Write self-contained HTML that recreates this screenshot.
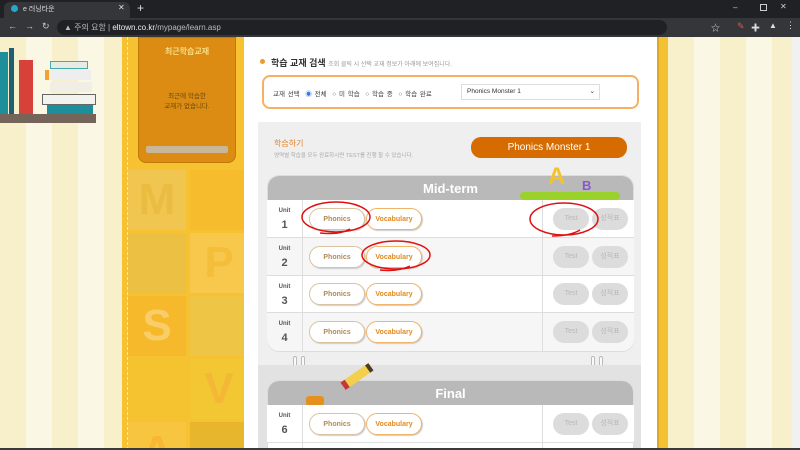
<!DOCTYPE html>
<html style="width:800px;height:450px;overflow:hidden"><head><meta charset="utf-8"><style>
*{margin:0;padding:0;box-sizing:border-box}
body{width:800px;height:450px;overflow:hidden;position:relative;font-family:"Liberation Sans","Noto Sans CJK KR",sans-serif;background:#faf6e2}
.abs{position:absolute}
.stripes{background:repeating-linear-gradient(90deg,#f8efcb 0 26px,#faf7e5 26px 52px)}
.pill{position:absolute;height:22px;border-radius:11px;font-size:7px;font-weight:bold;text-align:center;line-height:21px}
.ph{background:#fff;border:1px solid #d9c3a3;color:#b08a57;width:56px;box-shadow:1px 1px 1px #ccc}
.vo{background:#fff;border:1px solid #f0b36a;color:#e08a1e;width:56px;box-shadow:1px 1px 1px #ccc}
.gr{background:#dcdcdc;color:#b8b8b8;width:36px;font-weight:normal}
.unit{position:absolute;left:267px;width:35px;text-align:center;color:#555;font-weight:bold;line-height:1}
.unit small{display:block;font-size:6px;margin-bottom:2px}
.unit b{font-size:11px}
.row{position:absolute;left:267px;width:367px;border-bottom:1px solid #ddd;background:#fff}
.tile{position:absolute;width:58px;height:60px;overflow:hidden;font-size:44px;font-weight:bold;text-align:center;line-height:60px;color:rgba(220,170,40,.35)}
</style></head><body>
<!-- chrome -->
<div class="abs" style="left:0;top:0;width:800px;height:18px;background:#202124"></div>
<div class="abs" style="left:4px;top:2px;width:126px;height:16px;background:#35363a;border-radius:6px 6px 0 0"></div>
<div class="abs" style="left:11px;top:5px;width:7px;height:7px;border-radius:50%;background:#2aa6c9"></div>
<div class="abs" style="left:23px;top:4px;font-size:7px;color:#ddd">e 러닝타운</div>
<div class="abs" style="left:118px;top:3px;font-size:8px;color:#ddd">✕</div>
<div class="abs" style="left:137px;top:1px;font-size:12px;color:#ddd">+</div>
<div class="abs" style="left:733px;top:3px;font-size:8px;color:#ccc">–</div>
<div class="abs" style="left:760px;top:4px;width:7px;height:7px;border:1px solid #ccc"></div>
<div class="abs" style="left:780px;top:2px;font-size:8px;color:#ccc">✕</div>
<div class="abs" style="left:0;top:18px;width:800px;height:19px;background:#35363a"></div>
<div class="abs" style="left:8px;top:21px;font-size:9px;color:#ccc;letter-spacing:8px">←→↻</div>
<div class="abs" style="left:57px;top:20px;width:610px;height:15px;border-radius:8px;background:#202124"></div>
<div class="abs" style="left:64px;top:22px;font-size:8px;color:#bbb">▲ 주의 요함 | <span style="color:#eee">eltown.co.kr</span>/mypage/learn.asp</div>
<div class="abs" style="left:711px;top:21px;font-size:9px;color:#ccc">☆</div>
<div class="abs" style="left:737px;top:21px;font-size:9px;color:#d55">✎</div>
<div class="abs" style="left:751px;top:21px;font-size:9px;color:#ddd">✚</div>
<div class="abs" style="left:769px;top:21px;font-size:8px;color:#ddd">▲</div>
<div class="abs" style="left:786px;top:20px;font-size:9px;color:#ddd">⋮</div>
<!-- backgrounds -->
<div class="abs stripes" style="left:0;top:37px;width:122px;height:413px"></div>
<div class="abs stripes" style="left:668px;top:37px;width:124px;height:413px"></div>
<div class="abs" style="left:792px;top:37px;width:8px;height:413px;background:#f1f1f1"></div>
<!-- books -->
<div class="abs" style="left:0;top:52px;width:8px;height:62px;background:#1d8f9a"></div>
<div class="abs" style="left:9px;top:48px;width:5px;height:66px;background:#1d5f74"></div>
<div class="abs" style="left:19px;top:60px;width:14px;height:54px;background:#d8403a"></div>
<div class="abs" style="left:50px;top:61px;width:38px;height:8px;background:#e6ebe6;border:1px solid #4aa"></div>
<div class="abs" style="left:45px;top:70px;width:46px;height:10px;background:#eee;border-left:4px solid #f3a12f"></div>
<div class="abs" style="left:50px;top:82px;width:42px;height:10px;background:#f1eee6"></div>
<div class="abs" style="left:42px;top:94px;width:54px;height:11px;background:#f2f2ef;border:1px solid #666"></div>
<div class="abs" style="left:47px;top:105px;width:46px;height:9px;background:#1d8f9a"></div>
<div class="abs" style="left:0;top:114px;width:96px;height:9px;background:#75645a"></div>
<!-- sidebar -->
<div class="abs" style="left:122px;top:37px;width:122px;height:413px;background:#f6c232"></div>
<div class="tile" style="left:128px;top:170px;background:#f1c650">M</div>
<div class="tile" style="left:190px;top:170px;background:#f7bb2e"></div>
<div class="tile" style="left:128px;top:233px;background:#ecc042"></div>
<div class="tile" style="left:190px;top:233px;background:#f8c84c;color:rgba(240,180,40,.5)">P</div>
<div class="tile" style="left:128px;top:296px;background:#f7b92c;color:rgba(250,215,130,.7)">S</div>
<div class="tile" style="left:190px;top:296px;background:#efc545"></div>
<div class="tile" style="left:128px;top:359px;background:#f6c330"></div>
<div class="tile" style="left:190px;top:359px;background:#f3c633;color:rgba(245,170,60,.5)">V</div>
<div class="tile" style="left:128px;top:422px;height:28px;background:#f7c540;color:rgba(245,170,40,.5)">A</div>
<div class="tile" style="left:190px;top:422px;height:28px;background:#e7b62c"></div>
<div class="abs" style="left:127px;top:37px;width:0;height:413px;border-left:1px dashed #fde7a0"></div>
<div class="abs" style="left:138px;top:37px;width:98px;height:126px;background:#dc8c12;border-radius:0 0 8px 8px;border:1px solid #c07a0a"></div>
<div class="abs" style="left:138px;top:46px;width:98px;text-align:center;font-size:8px;font-weight:bold;color:#f8dd82">최근학습교재</div>
<div class="abs" style="left:138px;top:92px;width:98px;text-align:center;font-size:6.5px;line-height:10px;color:#6a4a10">최근에 학습한<br>교재가 없습니다.</div>
<div class="abs" style="left:146px;top:146px;width:82px;height:7px;background:#c9b79a;border-radius:2px"></div>
<!-- main -->
<div class="abs" style="left:244px;top:37px;width:413px;height:413px;background:#fff"></div>
<div class="abs" style="left:657px;top:37px;width:11px;height:413px;background:#f4c132;border-left:2px solid #dba728"></div>
<div class="abs" style="left:260px;top:59px;width:5px;height:5px;border-radius:50%;background:#ef9a2b"></div>
<div class="abs" style="left:271px;top:56px;font-size:9px;font-weight:bold;color:#333">학습 교재 검색 <span style="font-size:6px;font-weight:normal;color:#999">조회 클릭 시 선택 교재 정보가 아래에 보여집니다.</span></div>
<div class="abs" style="left:262px;top:75px;width:377px;height:34px;border:2px solid #f6b063;border-radius:8px"></div>
<div class="abs" style="left:273px;top:88px;font-size:6.5px;color:#444;word-spacing:1px">교재 선택 &nbsp;<span style="color:#2e7de1">◉</span> 전체 &nbsp;○ 미 학습 &nbsp;○ 학습 중 &nbsp;○ 학습 완료</div>
<div class="abs" style="left:461px;top:84px;width:139px;height:16px;border:1px solid #ddd;font-size:6.5px;line-height:14px;padding-left:5px;color:#333">Phonics Monster 1<span style="position:absolute;right:4px">⌄</span></div>
<!-- gray panel -->
<div class="abs" style="left:258px;top:122px;width:383px;height:328px;background:#efefef"></div>
<div class="abs" style="left:274px;top:138px;font-size:8px;color:#e5832a">학습하기</div>
<div class="abs" style="left:274px;top:151px;font-size:5.5px;color:#aaa">영역별 학습을 모두 완료하시면 TEST를 진행 할 수 있습니다.</div>
<div class="abs" style="left:471px;top:137px;width:156px;height:21px;border-radius:10px;background:#d66b00;color:#fff;font-size:10px;text-align:center;line-height:21px">Phonics Monster 1</div>
<!-- Mid-term -->
<div class="abs" style="left:267px;top:175px;width:367px;height:177px;background:#fff;border:1px solid #ddd;border-radius:12px;overflow:hidden">
<div style="height:25px;background:#b9b9b9;color:#fff;font-weight:bold;font-size:13px;text-align:center;line-height:26px">Mid-term</div></div>
<div class="abs" style="left:520px;top:192px;width:100px;height:8px;background:#9ad12a;border-radius:4px"></div>
<div class="abs" style="left:548px;top:163px;font-size:24px;font-weight:bold;color:#f6c22a">A</div>
<div class="abs" style="left:582px;top:178px;font-size:13px;font-weight:bold;color:#8a5ac8">B</div>
<div class="row" style="top:200px;height:38px"></div>
<div class="row" style="top:238px;height:38px;background:#f6f6f6"></div>
<div class="row" style="top:276px;height:37px"></div>
<div class="row" style="top:313px;height:38px;background:#f6f6f6;border-bottom:none;border-radius:0 0 12px 12px"></div>
<div class="abs" style="left:302px;top:200px;width:1px;height:151px;background:#ddd"></div>
<div class="abs" style="left:542px;top:200px;width:1px;height:151px;background:#ddd"></div>
<div class="unit" style="top:208px"><small>Unit</small><b>1</b></div>
<div class="unit" style="top:246px"><small>Unit</small><b>2</b></div>
<div class="unit" style="top:284px"><small>Unit</small><b>3</b></div>
<div class="unit" style="top:321px"><small>Unit</small><b>4</b></div>
<div class="pill ph" style="left:309px;top:208px">Phonics</div><div class="pill vo" style="left:366px;top:208px">Vocabulary</div>
<div class="pill ph" style="left:309px;top:246px">Phonics</div><div class="pill vo" style="left:366px;top:246px">Vocabulary</div>
<div class="pill ph" style="left:309px;top:283px">Phonics</div><div class="pill vo" style="left:366px;top:283px">Vocabulary</div>
<div class="pill ph" style="left:309px;top:321px">Phonics</div><div class="pill vo" style="left:366px;top:321px">Vocabulary</div>
<div class="pill gr" style="left:553px;top:208px">Test</div><div class="pill gr" style="left:592px;top:208px">성적표</div>
<div class="pill gr" style="left:553px;top:246px">Test</div><div class="pill gr" style="left:592px;top:246px">성적표</div>
<div class="pill gr" style="left:553px;top:283px">Test</div><div class="pill gr" style="left:592px;top:283px">성적표</div>
<div class="pill gr" style="left:553px;top:321px">Test</div><div class="pill gr" style="left:592px;top:321px">성적표</div>
<!-- rings -->
<div class="abs" style="left:293px;top:356px;width:4px;height:14px;border:1px solid #bbb;border-radius:2px;background:#fafafa"></div>
<div class="abs" style="left:301px;top:356px;width:4px;height:14px;border:1px solid #bbb;border-radius:2px;background:#fafafa"></div>
<div class="abs" style="left:591px;top:356px;width:4px;height:14px;border:1px solid #bbb;border-radius:2px;background:#fafafa"></div>
<div class="abs" style="left:599px;top:356px;width:4px;height:14px;border:1px solid #bbb;border-radius:2px;background:#fafafa"></div>
<div class="abs" style="left:258px;top:365px;width:383px;height:85px;background:#e2e2e2"></div>
<!-- Final -->
<div class="abs" style="left:267px;top:380px;width:367px;height:70px;background:#fff;border:1px solid #ddd;border-bottom:none;border-radius:12px 12px 0 0;overflow:hidden">
<div style="height:25px;background:#b9b9b9;color:#fff;font-weight:bold;font-size:13px;text-align:center;line-height:26px">Final</div></div>
<div class="abs" style="left:340px;top:372px;width:34px;height:9px;background:#f2cf4c;transform:rotate(-35deg);border-left:5px solid #c7353a;border-right:4px solid #4a3a2a"></div>
<div class="abs" style="left:306px;top:396px;width:18px;height:10px;background:#e5901c;border-radius:3px"></div>
<div class="row" style="top:405px;height:38px"></div>
<div class="abs" style="left:302px;top:405px;width:1px;height:45px;background:#ddd"></div>
<div class="abs" style="left:542px;top:405px;width:1px;height:45px;background:#ddd"></div>
<div class="unit" style="top:413px"><small>Unit</small><b>6</b></div>
<div class="pill ph" style="left:309px;top:413px">Phonics</div><div class="pill vo" style="left:366px;top:413px">Vocabulary</div>
<div class="pill gr" style="left:553px;top:413px">Test</div><div class="pill gr" style="left:592px;top:413px">성적표</div>
<!-- red annotations -->
<svg class="abs" style="left:0;top:0" width="800" height="450">
<g fill="none" stroke="#e01010" stroke-width="1.5">
<ellipse cx="336" cy="217" rx="34" ry="15"/>
<path d="M320 233 Q340 235 350 229"/>
<ellipse cx="396" cy="255" rx="34" ry="14"/>
<path d="M380 270 Q398 272 410 266"/>
<ellipse cx="564" cy="219" rx="34" ry="16"/>
<path d="M552 236 Q570 236 580 230"/>
</g></svg>
<div class="abs" style="left:0;top:448px;width:800px;height:2px;background:#3a3a3a"></div>
</body></html>
